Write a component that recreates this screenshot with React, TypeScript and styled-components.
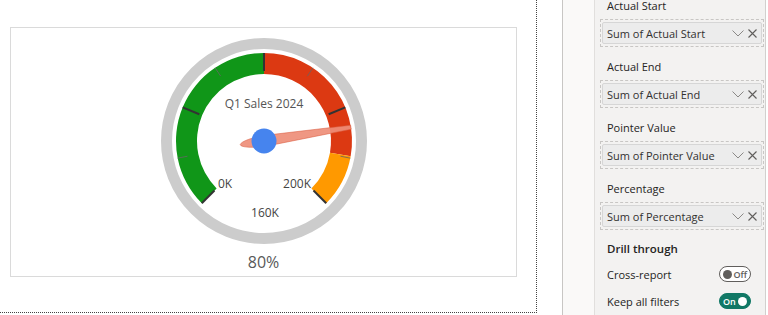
import React from 'react';
import styled, { createGlobalStyle } from 'styled-components';

const GlobalStyle = createGlobalStyle`
  html, body {
    margin: 0;
    padding: 0;
    background: #fff;
  }
  body {
    font-family: "Open Sans", "Liberation Sans", sans-serif;
  }
`;

const Page = styled.div`
  width: 768px;
  height: 315px;
  display: flex;
  overflow: hidden;
  background: #fff;
`;

const Canvas = styled.div`
  flex: none;
  box-sizing: border-box;
  width: 537px;
  height: 313px;
  padding: 27px 0 0 10px;
  border-right: 1px dotted #444;
  border-bottom: 1px dotted #444;
`;

const Visual = styled.div`
  box-sizing: border-box;
  width: 507px;
  height: 250px;
  border: 1px solid #dadada;
  padding-top: 7px;
  display: flex;
  flex-direction: column;
  align-items: center;
`;

const Percent = styled.div`
  margin-top: 5px;
  font-size: 16px;
  line-height: 20px;
  color: #595959;
`;

const Gutter = styled.div`
  flex: none;
  width: 25px;
`;

const Rail = styled.div`
  flex: none;
  box-sizing: border-box;
  width: 33px;
  height: 100%;
  background: #faf9f8;
  border-left: 1px solid #c8c6c4;
  border-right: 1px solid #e1dfdd;
`;

const Pane = styled.div`
  flex: none;
  box-sizing: border-box;
  width: 171px;
  height: 100%;
  background: #f3f2f1;
  border-right: 1px solid #d2d0ce;
  padding-left: 5px;
  color: #252423;
  font-size: 11px;
`;

const FieldList = styled.div`
  margin-top: -4px;
`;

const Group = styled.div`
  margin-bottom: 10px;
`;

const Label = styled.div`
  height: 20px;
  line-height: 20px;
  padding-left: 7px;
  margin-bottom: 3px;
  white-space: nowrap;
`;

const Well = styled.div`
  box-sizing: border-box;
  width: 164px;
  height: 28px;
  border: 1px dashed #c8c6c4;
  padding: 2px 1px;
`;

const Chip = styled.div`
  box-sizing: border-box;
  height: 22px;
  background: #ececec;
  border: 1px solid #d6d6d6;
  border-radius: 2px;
  padding: 0 4px;
  display: flex;
  align-items: center;
  color: #323130;
  white-space: nowrap;
`;

const ChipText = styled.span`
  flex: 1;
`;

const ChipIcons = styled.span`
  display: flex;
  align-items: center;
  gap: 4px;
`;

const SectionTitle = styled.div`
  height: 18px;
  line-height: 18px;
  padding-left: 7px;
  font-weight: 600;
  font-size: 11.5px;
`;

const ToggleRow = styled.div`
  height: 24px;
  display: flex;
  align-items: center;
  justify-content: space-between;
  padding: 0 14px 0 7px;
  margin-top: 3px;

  &:first-of-type {
    margin-top: 4px;
  }
`;

const Toggle = styled.div<{ on: boolean }>`
  box-sizing: border-box;
  width: 32px;
  height: 16px;
  border-radius: 8px;
  border: 1px solid ${({ on }) => (on ? '#117865' : '#605e5c')};
  background: ${({ on }) => (on ? '#117865' : '#fff')};
  color: ${({ on }) => (on ? '#fff' : '#605e5c')};
  display: flex;
  flex-direction: ${({ on }) => (on ? 'row-reverse' : 'row')};
  align-items: center;
  justify-content: space-between;
  padding: 0 3px;
  font-size: 9px;
  font-weight: 600;
  line-height: 1;

  &::before {
    content: "";
    width: 9px;
    height: 9px;
    border-radius: 50%;
    background: ${({ on }) => (on ? '#fff' : '#605e5c')};
  }
`;

const CX = 106;
const CY = 106;

const polar = (r: number, deg: number): [number, number] => {
  const a = ((deg - 90) * Math.PI) / 180;
  return [CX + r * Math.cos(a), CY + r * Math.sin(a)];
};

const sector = (r0: number, r1: number, a0: number, a1: number) => {
  const [x0, y0] = polar(r1, a0);
  const [x1, y1] = polar(r1, a1);
  const [x2, y2] = polar(r0, a1);
  const [x3, y3] = polar(r0, a0);
  const large = a1 - a0 > 180 ? 1 : 0;
  return `M${x0} ${y0} A${r1} ${r1} 0 ${large} 1 ${x1} ${y1} L${x2} ${y2} A${r0} ${r0} 0 ${large} 0 ${x3} ${y3} Z`;
};

const bands = [
  { from: -135, to: 0, color: '#109618' },
  { from: 0, to: 100, color: '#dc3912' },
  { from: 100, to: 135, color: '#ff9900' },
];

const majorTicks = [-135, -67.5, 0, 67.5, 135];
const minorTicks = [-101.25, -33.75, 33.75, 101.25];

const Gauge = () => (
  <svg width="212" height="212" viewBox="0 0 212 212">
    <circle cx={CX} cy={CY} r="97.5" fill="#fff" stroke="#cccccc" strokeWidth="11" />
    {bands.map((b) => (
      <path key={b.from} d={sector(67, 88, b.from, b.to)} fill={b.color} />
    ))}
    {majorTicks.map((t) => {
      const [x0, y0] = polar(70, t);
      const [x1, y1] = polar(88, t);
      return <line key={t} x1={x0} y1={y0} x2={x1} y2={y1} stroke="#333" strokeWidth="2" />;
    })}
    {minorTicks.map((t) => {
      const [x0, y0] = polar(78, t);
      const [x1, y1] = polar(88, t);
      return <line key={t} x1={x0} y1={y0} x2={x1} y2={y1} stroke="#666" strokeWidth="1" opacity="0.8" />;
    })}
    <g fontFamily='"Open Sans", "Liberation Sans", sans-serif' fontSize="12" fill="#555">
      <text x={CX} y="68" textAnchor="middle" dominantBaseline="central">Q1 Sales 2024</text>
      <text x="60" y="148" dominantBaseline="central" fill="#444">0K</text>
      <text x="153" y="148" textAnchor="end" dominantBaseline="central" fill="#444">200K</text>
      <text x="107" y="177" textAnchor="middle" dominantBaseline="central" fill="#444">160K</text>
    </g>
    <g transform={`translate(${CX} ${CY}) rotate(81)`}>
      <path
        d="M-2 -88 L2 -88 L5.5 0 C5 16 2 24 0 24 C-2 24 -5 16 -5.5 0 Z"
        fill="#ee8e78"
        fillOpacity="0.92"
        stroke="#d9593b"
        strokeOpacity="0.7"
        strokeWidth="0.7"
      />
    </g>
    <circle cx={CX} cy={CY} r="12.5" fill="#4684ee" />
  </svg>
);

const Chevron = () => (
  <svg width="12" height="7" viewBox="0 0 12 7">
    <polyline points="0.5,0.5 6,6 11.5,0.5" fill="none" stroke="#8a8886" strokeWidth="1" />
  </svg>
);

const Cross = () => (
  <svg width="9" height="9" viewBox="0 0 9 9">
    <path d="M0.5 0.5 L8.5 8.5 M8.5 0.5 L0.5 8.5" stroke="#605e5c" strokeWidth="1.1" />
  </svg>
);

const fields = [
  { label: 'Actual Start', value: 'Sum of Actual Start' },
  { label: 'Actual End', value: 'Sum of Actual End' },
  { label: 'Pointer Value', value: 'Sum of Pointer Value' },
  { label: 'Percentage', value: 'Sum of Percentage' },
];

export default function App() {
  return (
    <>
      <GlobalStyle />
      <Page>
        <Canvas>
          <Visual>
            <Gauge />
            <Percent>80%</Percent>
          </Visual>
        </Canvas>
        <Gutter />
        <Rail />
        <Pane>
          <FieldList>
            {fields.map((f) => (
              <Group key={f.label}>
                <Label>{f.label}</Label>
                <Well>
                  <Chip>
                    <ChipText>{f.value}</ChipText>
                    <ChipIcons>
                      <Chevron />
                      <Cross />
                    </ChipIcons>
                  </Chip>
                </Well>
              </Group>
            ))}
          </FieldList>
          <SectionTitle>Drill through</SectionTitle>
          <div>
            <ToggleRow>
              <span>Cross-report</span>
              <Toggle on={false}>Off</Toggle>
            </ToggleRow>
            <ToggleRow>
              <span>Keep all filters</span>
              <Toggle on>On</Toggle>
            </ToggleRow>
          </div>
        </Pane>
      </Page>
    </>
  );
}
